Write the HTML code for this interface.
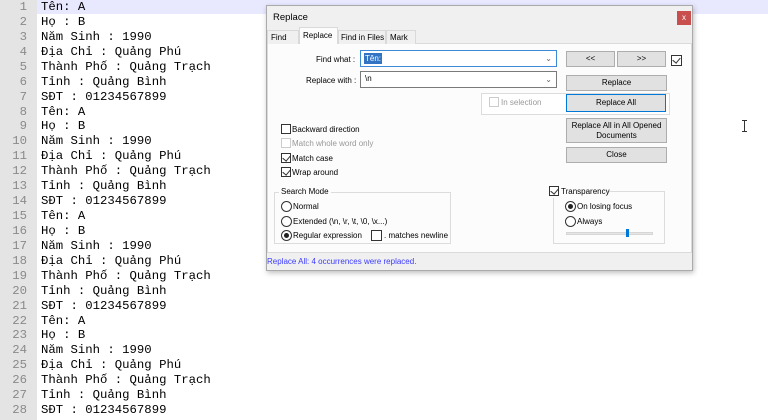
<!DOCTYPE html>
<html><head><meta charset="utf-8"><style>
*{margin:0;padding:0;box-sizing:border-box}
body{width:768px;height:420px;overflow:hidden;background:#fff;position:relative;font-family:"Liberation Sans",sans-serif}
.gut{position:absolute;left:0;top:0;width:37px;height:420px;background:#e4e4e4}
.hl{position:absolute;left:37px;top:0;width:731px;height:14px;background:#e8e8ff}
.ln{position:absolute;left:0;width:27px;text-align:right;color:#8a8a8a;font:12.3px "Liberation Mono",monospace}
.tx{position:absolute;left:41px;color:#000;font:12.3px "Liberation Mono","DejaVu Sans Mono",monospace;white-space:pre}
.a{position:absolute;font-size:8px;color:#000;white-space:nowrap;line-height:11px}
.dlg{position:absolute;left:266px;top:5px;width:427px;height:266px;background:#f0f0f0;border:1px solid #aaa;box-shadow:1px 2px 5px rgba(0,0,0,.25)}
.btn{position:absolute;background:#e1e1e1;border:1px solid #adadad;font-size:8px;text-align:center;line-height:14px}
.cb{position:absolute;width:10px;height:10px;border:1px solid #333;background:#fff}
.ck::after{content:"";position:absolute;left:2px;top:0px;width:4px;height:6px;border:solid #333;border-width:0 1px 1px 0;transform:rotate(40deg)}
.rd{position:absolute;width:11px;height:11px;border:1px solid #333;border-radius:50%;background:#fff}
.rd.on::after{content:"";position:absolute;left:2px;top:2px;width:5px;height:5px;border-radius:50%;background:#222}
.combo{position:absolute;background:#fff;border:1px solid #7a7a7a;height:17px}
.combo .dd{position:absolute;right:4px;top:3px;font-size:8px;color:#666}
.grp{position:absolute;border:1px solid #dcdcdc}
</style></head><body>
<div class="gut"></div>
<div class="hl"></div>
<div id="ed"></div>
<script>
var L=["Tên: A","Họ : B","Năm Sinh : 1990","Địa Chỉ : Quảng Phú","Thành Phố : Quảng Trạch","Tỉnh : Quảng Bình","SĐT : 01234567899"];
var h="";for(var i=0;i<28;i++){var y=0+i*14.93;h+='<div class="ln" style="top:'+y+'px">'+(i+1)+'</div><div class="tx" style="top:'+y+'px">'+L[i%7]+'</div>';}
document.getElementById("ed").innerHTML=h;
</script>
<div style="position:absolute;left:744px;top:120px;width:1px;height:12px;background:#333"></div>
<div style="position:absolute;left:742px;top:120px;width:5px;height:1px;background:#333"></div>
<div style="position:absolute;left:742px;top:131px;width:5px;height:1px;background:#333"></div>

<div class="dlg"></div>
<div class="a" style="left:273px;top:12px;font-size:9.5px">Replace</div>
<div style="position:absolute;left:677px;top:11px;width:14px;height:14px;background:#c94f4f;color:#fff;font-size:8px;text-align:center;line-height:14px">x</div>
<!-- tabs -->
<div style="position:absolute;left:267px;top:43px;width:425px;height:210px;background:#fcfcfc;border:1px solid #dadada"></div>
<div style="position:absolute;left:267px;top:30px;width:32px;height:14px;border:1px solid #d9d9d9;border-bottom:none;background:#f0f0f0"></div>
<div class="a" style="left:271px;top:32px">Find</div>
<div style="position:absolute;left:299px;top:27px;width:39px;height:17px;border:1px solid #d9d9d9;border-bottom:none;background:#fcfcfc"></div>
<div class="a" style="left:303px;top:30px">Replace</div>
<div style="position:absolute;left:338px;top:30px;width:48px;height:14px;border:1px solid #d9d9d9;border-bottom:none;background:#f0f0f0"></div>
<div class="a" style="left:341px;top:32px">Find in Files</div>
<div style="position:absolute;left:386px;top:30px;width:30px;height:14px;border:1px solid #d9d9d9;border-bottom:none;background:#f0f0f0"></div>
<div class="a" style="left:390px;top:32px">Mark</div>

<div class="a" style="left:316px;top:54px">Find what :</div>
<div class="combo" style="left:360px;top:50px;width:197px;border-color:#3c8ad8"><span style="position:absolute;left:3px;top:2px;background:#3373c4;color:#fff;font-size:8px;line-height:11px;padding:0 1px">Tên:</span><span class="dd">&#8964;</span></div>
<div class="a" style="left:306px;top:75px">Replace with :</div>
<div class="combo" style="left:360px;top:71px;width:197px"><span style="position:absolute;left:4px;top:2px;font-size:8px">\n</span><span class="dd">&#8964;</span></div>

<div class="btn" style="left:566px;top:51px;width:49px;height:16px">&lt;&lt;</div>
<div class="btn" style="left:617px;top:51px;width:49px;height:16px">&gt;&gt;</div>
<div class="cb ck" style="left:671px;top:55px;width:11px;height:11px"></div>
<div class="btn" style="left:566px;top:75px;width:101px;height:16px">Replace</div>
<div class="grp" style="left:481px;top:93px;width:189px;height:22px;background:#fff"></div>
<div class="cb" style="left:489px;top:97px;border-color:#ccc"></div>
<div class="a" style="left:501px;top:97px;color:#999">In selection</div>
<div class="btn" style="left:566px;top:94px;width:100px;height:18px;border-color:#0078d7;line-height:16px">Replace All</div>
<div class="btn" style="left:566px;top:118px;width:101px;height:25px;line-height:10px;padding-top:2px;white-space:nowrap">Replace All in All Opened<br>Documents</div>
<div class="btn" style="left:566px;top:147px;width:101px;height:16px">Close</div>

<div class="cb" style="left:281px;top:124px"></div><div class="a" style="left:292px;top:124px">Backward direction</div>
<div class="cb" style="left:281px;top:138px;border-color:#ccc"></div><div class="a" style="left:292px;top:138px;color:#999">Match whole word only</div>
<div class="cb ck" style="left:281px;top:153px"></div><div class="a" style="left:292px;top:153px">Match case</div>
<div class="cb ck" style="left:281px;top:167px"></div><div class="a" style="left:292px;top:167px">Wrap around</div>

<div class="grp" style="left:274px;top:192px;width:177px;height:52px"></div>
<div class="a" style="left:279px;top:186px;background:#fcfcfc;padding:0 2px">Search Mode</div>
<div class="rd" style="left:281px;top:201px"></div><div class="a" style="left:293px;top:201px">Normal</div>
<div class="rd" style="left:281px;top:216px"></div><div class="a" style="left:293px;top:216px">Extended (\n, \r, \t, \0, \x...)</div>
<div class="rd on" style="left:281px;top:230px"></div><div class="a" style="left:293px;top:230px">Regular expression</div>
<div class="cb" style="left:371px;top:230px;width:11px;height:11px"></div><div class="a" style="left:384px;top:230px">. matches newline</div>

<div class="grp" style="left:553px;top:191px;width:112px;height:53px"></div>
<div style="position:absolute;left:547px;top:184px;width:60px;height:14px;background:#fcfcfc"></div>
<div class="cb ck" style="left:549px;top:186px"></div><div class="a" style="left:561px;top:186px">Transparency</div>
<div class="rd on" style="left:565px;top:201px"></div><div class="a" style="left:577px;top:201px">On losing focus</div>
<div class="rd" style="left:565px;top:216px"></div><div class="a" style="left:577px;top:216px">Always</div>
<div style="position:absolute;left:566px;top:232px;width:87px;height:3px;background:#e6e6e6;border:1px solid #d6d6d6"></div>
<div style="position:absolute;left:626px;top:229px;width:3px;height:8px;background:#0078d7"></div>

<div class="a" style="left:267px;top:256px;color:#3a3aff">Replace All: 4 occurrences were replaced.</div>
</body></html>
